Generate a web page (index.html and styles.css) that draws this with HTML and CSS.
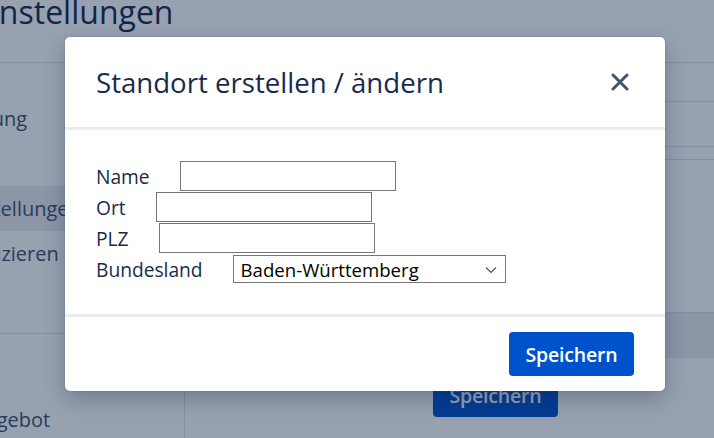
FILE: index.html
```html
<!DOCTYPE html>
<html lang="de">
<head>
<meta charset="utf-8">
<title>Einstellungen</title>
<link rel="stylesheet" href="styles.css">
</head>
<body>
<div class="app">
  <header class="app-header">
    <h1 class="page-title">Einstellungen</h1>
  </header>
  <div class="layout">
    <nav class="sidebar">
      <div class="nav-item">Benutzerverwaltung</div>
      <div class="nav-item">Profil</div>
      <div class="nav-item active">Datenschutzeinstellungen</div>
      <div class="nav-item">Mitarbeiter zertifizieren</div>
      <div class="nav-item">Hilfe</div>
      <div class="nav-divider"></div>
      <div class="nav-item">Rechnung</div>
      <div class="nav-item">Produkte und Angebot</div>
    </nav>
    <main class="content">
      <div class="tabs"></div>
      <div class="table-head"></div>
      <div class="table-body"></div>
      <div class="table-foot"></div>
      <div class="content-actions">
        <button class="btn btn-primary" type="button">Speichern</button>
      </div>
    </main>
  </div>
</div>

<div class="overlay"></div>

<div class="modal" role="dialog" aria-labelledby="modal-title">
  <div class="modal-header">
    <h2 class="modal-title" id="modal-title">Standort erstellen / ändern</h2>
    <button class="modal-close" type="button" aria-label="Schließen">
      <svg width="18" height="18" viewBox="0 0 18 18" aria-hidden="true">
        <path d="M2 2 L16 16 M16 2 L2 16" stroke="#44546f" stroke-width="3" stroke-linecap="round" fill="none"/>
      </svg>
    </button>
  </div>
  <form class="modal-body">
    <div class="form-row">
      <label class="form-label" for="f-name">Name</label>
      <input class="form-input" id="f-name" type="text">
    </div>
    <div class="form-row">
      <label class="form-label" for="f-ort">Ort</label>
      <input class="form-input" id="f-ort" type="text">
    </div>
    <div class="form-row">
      <label class="form-label" for="f-plz">PLZ</label>
      <input class="form-input" id="f-plz" type="text">
    </div>
    <div class="form-row form-row-select">
      <label class="form-label" for="f-land">Bundesland</label>
      <span class="select-wrap">
        <select class="form-select" id="f-land">
          <option>Baden-Württemberg</option>
          <option>Bayern</option>
          <option>Berlin</option>
        </select>
        <svg class="select-chevron" width="12" height="8" viewBox="0 0 12 8" aria-hidden="true">
          <path d="M1 1.5 L6 6.5 L11 1.5" stroke="#505050" stroke-width="1.1" fill="none"/>
        </svg>
      </span>
    </div>
  </form>
  <div class="modal-footer">
    <button class="btn btn-primary" type="button">Speichern</button>
  </div>
</div>
</body>
</html>
```

FILE: styles.css
```css
* {
  box-sizing: border-box;
}

html, body {
  margin: 0;
  padding: 0;
  height: 100%;
  overflow: hidden;
}

body {
  font-family: "Open Sans", "Noto Sans", "DejaVu Sans", sans-serif;
  background: #ffffff;
  color: #172b4d;
  position: relative;
}

/* ---------- page behind the dialog ---------- */
.app {
  margin-left: -170px;
  width: 1100px;
}

.app-header {
  height: 63px;
  border-bottom: 1px solid #dfe1e6;
  padding-left: 143px;
  display: flex;
  align-items: flex-start;
}

.page-title {
  margin: -6px 0 0 0;
  font-size: 32px;
  font-weight: 400;
  line-height: 36px;
  color: #172b4d;
}

.layout {
  display: flex;
  height: 400px;
}

.sidebar {
  width: 355px;
  flex: none;
  border-right: 1px solid #dfe1e6;
  padding-top: 33px;
}

.nav-item {
  height: 45px;
  display: flex;
  align-items: center;
  padding-left: 9px;
  font-size: 20px;
  color: #42526e;
  white-space: nowrap;
}

.nav-item.active {
  background: #ebecf0;
}

.nav-divider {
  height: 1px;
  background: #dfe1e6;
  margin: 12px 0 18px;
}

.content {
  flex: 1;
  display: flex;
  flex-direction: column;
}

.tabs {
  height: 39px;
  flex: none;
  border-bottom: 1px solid #dfe1e6;
}

.table-head {
  margin-top: 44px;
  height: 14px;
  flex: none;
  border-top: 1px solid #dfe1e6;
  border-bottom: 1px solid #dfe1e6;
}

.table-body {
  height: 152px;
  flex: none;
}

.table-foot {
  height: 46px;
  flex: none;
  background: #ebecf0;
  border-top: 1px solid #dfe1e6;
}

.content-actions {
  padding-top: 15px;
  padding-left: 248px;
}

/* ---------- buttons ---------- */
.btn {
  font-family: inherit;
  border: 0;
  cursor: pointer;
}

.btn-primary {
  height: 44px;
  width: 125px;
  border-radius: 4px;
  background: #0052cc;
  color: #ffffff;
  font-size: 19.5px;
  font-weight: 600;
  letter-spacing: -0.2px;
  padding: 0;
}

/* ---------- overlay + dialog ---------- */
.overlay {
  position: absolute;
  inset: 0;
  background: rgba(9, 30, 66, 0.42);
}

.modal {
  position: absolute;
  left: 65px;
  top: 37px;
  width: 600px;
  background: #ffffff;
  border-radius: 5px;
  box-shadow: 0 8px 22px rgba(9, 30, 66, 0.28), 0 0 2px rgba(9, 30, 66, 0.2);
  display: flex;
  flex-direction: column;
}

.modal-header {
  height: 93px;
  border-bottom: 3px solid #ebecf0;
  display: flex;
  align-items: center;
  justify-content: space-between;
  padding: 0 36px 0 31px;
}

.modal-title {
  margin: 0;
  font-size: 27.6px;
  font-weight: 400;
  color: #172b4d;
}

.modal-close {
  background: none;
  border: 0;
  padding: 0;
  width: 18px;
  height: 18px;
  display: flex;
}

.modal-body {
  margin: 0;
  padding: 31px;
  display: flex;
  flex-direction: column;
  gap: 1px;
}

.form-row {
  display: flex;
  align-items: center;
  height: 30px;
}

.form-row-select {
  height: 28px;
  margin-top: 1px;
}

.form-label {
  font-size: 19.2px;
  color: #172b4d;
  margin-right: 30px;
}

.form-input {
  width: 216px;
  height: 30px;
  border: 1px solid #767676;
  border-radius: 0;
  padding: 0 4px;
  font-family: inherit;
  font-size: 18px;
  background: #ffffff;
}

.select-wrap {
  position: relative;
  display: inline-flex;
}

.form-select {
  appearance: none;
  -webkit-appearance: none;
  width: 273px;
  height: 28px;
  border: 1px solid #767676;
  border-radius: 0;
  background: #ffffff;
  padding: 0 0 0 7px;
  font-family: inherit;
  font-size: 18.6px;
  color: #000000;
}

.select-chevron {
  position: absolute;
  right: 9px;
  top: 11px;
  pointer-events: none;
}

.modal-footer {
  border-top: 3px solid #ebecf0;
  padding: 15px 31px;
  display: flex;
  justify-content: flex-end;
}
```
